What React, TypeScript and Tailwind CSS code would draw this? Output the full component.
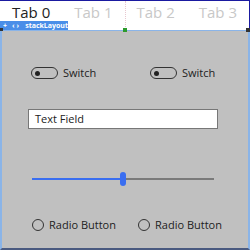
import React from "react";

function Sw() {
  return (
    <div className="flex items-center gap-[5px] h-[14px]">
      <div className="w-[27px] h-[12px] rounded-full border-[1.5px] border-[#333] flex items-center pl-[3px]">
        <div className="w-[5px] h-[5px] rounded-full bg-[#222]" />
      </div>
      <span className="text-[11px] leading-[14px] text-[#222]">Switch</span>
    </div>
  );
}

function Radio() {
  return (
    <div className="flex items-center gap-[5px] h-[14px]">
      <div className="w-[12px] h-[12px] rounded-full border-[1.5px] border-[#333]" />
      <span className="text-[11px] leading-[14px] text-[#222]">Radio Button</span>
    </div>
  );
}

export default function App() {
  return (
    <div className="w-[250px] h-[250px] relative overflow-hidden bg-white" style={{ fontFamily: '"Open Sans", "Noto Sans", sans-serif' }}>
      <div className="h-[30px] border-t border-t-[#1a1aa0] border-r border-r-[#1a1aa0] bg-white flex relative">
        {["Tab 0", "Tab 1", "Tab 2", "Tab 3"].map((t, i) => (
          <div key={t} className={`flex-1 flex justify-center pt-[3px] ${i === 0 ? "text-[#222]" : "text-[#c8c8c8]"}`}>
            <span className="text-[15px] leading-[16px] h-[16px]">{t}</span>
          </div>
        ))}
        <div className="absolute left-[125px] top-0 h-[28px] border-l border-dotted border-l-[#e8c8d0]" />
      </div>
      <div className="absolute left-0 top-[21px] h-[9px] w-[68px] bg-[#4a8ee8] text-white text-[7px] leading-[9px] font-bold flex items-center pl-[3px]">
        <span className="w-[11px]">+</span>
        <span className="w-[16px]">‹ ›</span>
        <span>stackLayout</span>
      </div>
      <div className="absolute left-[123px] top-[28px] w-[4px] h-[4px] bg-[#2c9a2c]" />
      <div className="absolute left-[246px] top-[28px] w-[4px] h-[4px] bg-[#333]" />
      <div className="absolute left-0 top-[28px] w-[3px] h-[3px] bg-[#333]" />
      <div className="h-[220px] bg-[#c0c0c0] border-l-2 border-r-2 border-b-2 border-t border-[#8ab4e8] border-b-[#4a5a80] flex flex-col">
        <div className="flex mt-[35px] pl-[29px]">
          <div className="w-[119px]"><Sw /></div>
          <Sw />
        </div>
        <div className="mt-[29px] ml-[26px] w-[190px] h-[20px] bg-white border border-[#777] text-[11px] text-[#222] pl-[6px] leading-[18px]">
          Text Field
        </div>
        <div className="mt-[43px] ml-[30px] w-[182px] h-[14px] relative flex items-center">
          <div className="w-[90px] h-[2px] bg-[#3a6ef0]" />
          <div className="flex-1 h-[2px] bg-[#7a7a7a]" />
          <div className="absolute left-[88px] top-0 w-[6px] h-[14px] rounded-[3px] bg-[#3a6ef0]" />
        </div>
        <div className="flex mt-[32px] pl-[30px]">
          <div className="w-[106px]"><Radio /></div>
          <Radio />
        </div>
      </div>
    </div>
  );
}
